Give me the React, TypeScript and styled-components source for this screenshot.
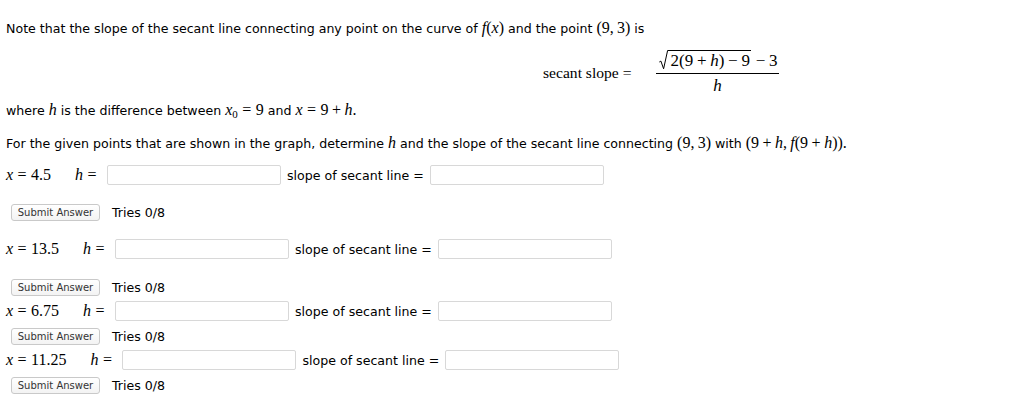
import styled, { createGlobalStyle } from 'styled-components';

const GlobalStyle = createGlobalStyle`
  body {
    margin: 0;
    background: #fff;
    color: #000;
    font-family: "DejaVu Sans", Verdana, sans-serif;
    font-size: 12.6px;
  }
`;

const Page = styled.div`
  padding: 18px 6px 0;
`;

const Line = styled.div<{ $top?: number }>`
  height: 20px;
  line-height: 20px;
  margin-top: ${({ $top }) => $top ?? 0}px;
  white-space: nowrap;
`;

const M = styled.span`
  font-family: "Liberation Serif", "Times New Roman", serif;
  font-size: 16px;
`;

const V = styled.i`
  font-family: "Liberation Serif", "Times New Roman", serif;
  font-style: italic;
`;

// relation (=) and binary operator (+, −) spacing, as a math renderer would
const Op = styled.span<{ $rel?: boolean }>`
  margin: 0 ${({ $rel }) => ($rel ? '0.28em' : '0.22em')};
`;

const Sub = styled.sub`
  font-size: 11px;
  vertical-align: -3px;
  line-height: 0;
`;

const Display = styled.div`
  display: flex;
  align-items: center;
  margin-top: 12px;
  padding-left: 537px;
  font-family: "Liberation Serif", "Times New Roman", serif;
  font-size: 15.6px;
  white-space: nowrap;
`;

const DisplayLabel = styled.span`
  margin-right: 25px;
`;

const Fraction = styled.span`
  display: inline-flex;
  flex-direction: column;
  align-items: center;
  font-size: 17px;
`;

const Numerator = styled.span`
  display: flex;
  align-items: flex-end;
  padding: 0 1px 3px 3px;
`;

const Bar = styled.span`
  align-self: stretch;
  height: 1px;
  background: #000;
`;

const Denominator = styled.span`
  line-height: 20px;
  padding-top: 2px;
`;

const Radical = styled.span`
  display: inline-flex;
  align-items: stretch;
`;

const Radicand = styled.span`
  border-top: 1px solid #000;
  line-height: 19px;
  padding: 0 1px 0 2px;
`;

const After = styled.span`
  line-height: 19px;
  margin-left: 1px;
`;

const Parts = styled.div`
  margin-top: 10px;
`;

const Part = styled.div<{ $gap: number; $after: number }>`
  display: flex;
  flex-direction: column;
  gap: ${({ $gap }) => $gap}px;
  margin-bottom: ${({ $after }) => $after}px;
`;

const AnswerRow = styled.div`
  display: flex;
  align-items: center;
  height: 24px;
  white-space: nowrap;
`;

const XLabel = styled(M)`
  margin-right: 24px;
`;

const HLabel = styled(M)`
  margin-right: 6px;
`;

const Field = styled.input`
  box-sizing: border-box;
  width: 174px;
  height: 20px;
  border: 1px solid #d8d8d8;
  border-radius: 2px;
  background: #fff;
  padding: 0 4px;
  outline: none;
`;

const SlopeLabel = styled.span`
  margin: 0 6px 0 6px;
`;

const SubmitRow = styled.div`
  display: flex;
  align-items: center;
  gap: 12px;
  height: 24px;
  padding-left: 5px;
`;

const SubmitButton = styled.button`
  box-sizing: border-box;
  width: 89px;
  height: 17px;
  padding: 0;
  border: 1px solid #c9c9c9;
  border-radius: 3px;
  background: linear-gradient(#ffffff, #f3f3f3);
  color: #333;
  font-family: "DejaVu Sans", Verdana, sans-serif;
  font-size: 10px;
`;

const Surd = () => (
  <svg width="9" height="20" viewBox="0 0 9 20" style={{ display: 'block' }}>
    <path d="M0.3 12 L1.9 11.1 L4.6 18.8 L8.6 0.5 L9 0.5" fill="none" stroke="#000" strokeWidth="1" />
  </svg>
);

const parts = [
  { x: '4.5', gap: 13, after: 13 },
  { x: '13.5', gap: 14, after: 0 },
  { x: '6.75', gap: 1, after: 0 },
  { x: '11.25', gap: 1, after: 0 },
];

export default function App() {
  return (
    <>
      <GlobalStyle />
      <Page>
        <Line>
          Note that the slope of the secant line connecting any point on the curve of{' '}
          <M>
            <V>f</V>(<V>x</V>)
          </M>{' '}
          and the point <M>(9,&#8201;3)</M> is
        </Line>

        <Display>
          <DisplayLabel>secant slope =</DisplayLabel>
          <Fraction>
            <Numerator>
              <Radical>
                <Surd />
                <Radicand>
                  2(9<Op>+</Op>
                  <V>h</V>)<Op>−</Op>9
                </Radicand>
              </Radical>
              <After>
                <Op>−</Op>3
              </After>
            </Numerator>
            <Bar />
            <Denominator>
              <V>h</V>
            </Denominator>
          </Fraction>
        </Display>

        <Line $top={4}>
          where <M><V>h</V></M> is the difference between{' '}
          <M>
            <V>x</V>
            <Sub>0</Sub>
            <Op $rel>=</Op>9
          </M>{' '}
          and{' '}
          <M>
            <V>x</V>
            <Op $rel>=</Op>9<Op>+</Op>
            <V>h</V>.
          </M>
        </Line>

        <Line $top={13}>
          For the given points that are shown in the graph, determine <M><V>h</V></M> and the slope of
          the secant line connecting <M>(9,&#8201;3)</M> with{' '}
          <M>
            (9<Op>+</Op>
            <V>h</V>,&#8201;<V>f</V>(9<Op>+</Op>
            <V>h</V>)).
          </M>
        </Line>

        <Parts>
          {parts.map((p) => (
            <Part key={p.x} $gap={p.gap} $after={p.after}>
              <AnswerRow>
                <XLabel>
                  <V>x</V>
                  <Op $rel>=</Op>
                  {p.x}
                </XLabel>
                <HLabel>
                  <V>h</V>
                  <Op $rel>=</Op>
                </HLabel>
                <Field type="text" />
                <SlopeLabel>slope of secant line =</SlopeLabel>
                <Field type="text" />
              </AnswerRow>
              <SubmitRow>
                <SubmitButton type="button">Submit Answer</SubmitButton>
                <span>Tries 0/8</span>
              </SubmitRow>
            </Part>
          ))}
        </Parts>
      </Page>
    </>
  );
}
